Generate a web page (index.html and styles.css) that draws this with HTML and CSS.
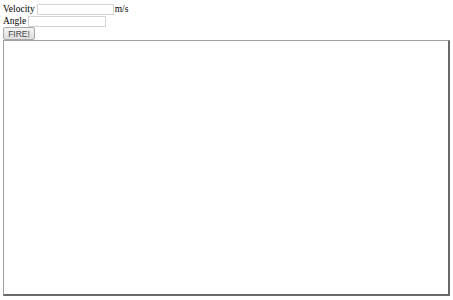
FILE: index.html
```html
<!DOCTYPE html>
<html lang="en">
<head>
  <meta charset="UTF-8" />
  <title>Projectile</title>
  <link rel="stylesheet" href="styles.css">
</head>
<body>
  <div class="row">
    <label for="velocity">Velocity</label>
    <input type="text" id="velocity" class="field field-wide" />
    <span class="unit">m/s</span>
  </div>
  <div class="row">
    <label for="angle">Angle</label>
    <input type="text" id="angle" class="field" />
  </div>
  <button id="fire" class="fire">FIRE!</button>
  <div class="stage"></div>
</body>
</html>
```

FILE: styles.css
```css
body {
  margin: 3px;
  font-family: "Liberation Serif", "Times New Roman", serif;
  font-size: 9.5px;
  color: #000;
  background: #fff;
}

.row {
  display: flex;
  align-items: center;
  height: 12px;
  line-height: 12px;
}

.field {
  width: 78px;
  height: 11px;
  padding: 0;
  margin: 0 1px 0 2px;
  border: 1px solid #d4d4d4;
  font-size: 9px;
  box-sizing: border-box;
}

.field-wide {
  width: 77px;
}

.fire {
  display: block;
  width: 32px;
  height: 13px;
  padding: 0;
  font-family: "Liberation Sans", Arial, sans-serif;
  font-size: 8.5px;
  color: #444;
  background: linear-gradient(#f4f4f4, #dedede);
  border: 1px solid #a9a9a9;
  border-radius: 2px;
}

.stage {
  width: 444px;
  height: 253px;
  border-style: solid;
  border-width: 1px 2px 2px 1px;
  border-color: #a0a0a0 #696969 #696969 #a0a0a0;
  background: #fff;
}
```
